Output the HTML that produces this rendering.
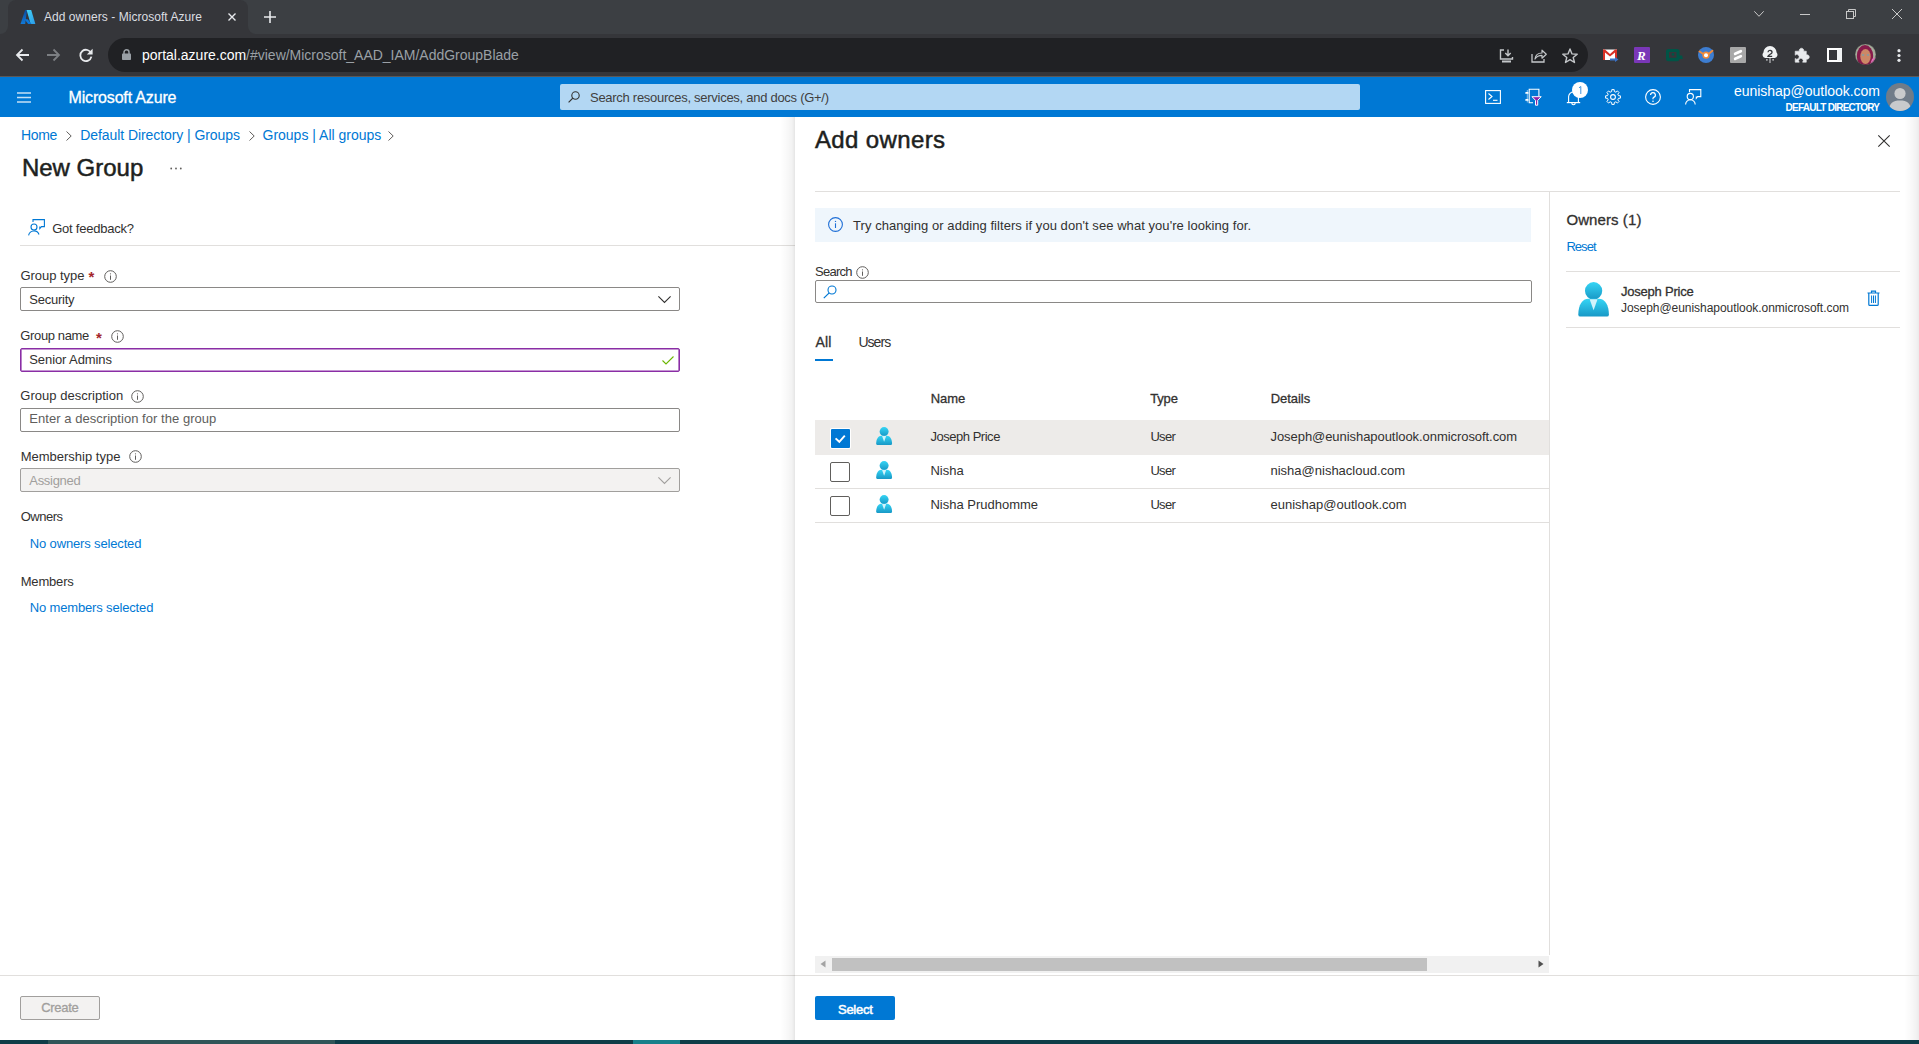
<!DOCTYPE html>
<html><head><meta charset="utf-8"><title>Add owners - Microsoft Azure</title>
<style>
html,body{margin:0;padding:0}
body{width:1919px;height:1044px;overflow:hidden;position:relative;background:#fff;font-family:"Liberation Sans",sans-serif}
.a{position:absolute}
.t{position:absolute;white-space:pre;line-height:1}
svg{position:absolute;overflow:visible}

</style></head><body>
<div class="a" style="left:0;top:0;width:1919px;height:34px;background:#3c3f43"></div>
<div class="a" style="left:8px;top:0px;width:240px;height:34px;background:#35363a;border-radius:8px 8px 0 0"></div>
<div class="a" style="left:0px;top:26px;width:8px;height:8px;background:#35363a"></div>
<div class="a" style="left:248px;top:26px;width:8px;height:8px;background:#35363a"></div>
<div class="a" style="left:0px;top:18px;width:8px;height:16px;background:#3c3f43;border-bottom-right-radius:8px"></div>
<div class="a" style="left:248px;top:18px;width:8px;height:16px;background:#3c3f43;border-bottom-left-radius:8px"></div>
<div class="a" style="left:0;top:34px;width:1919px;height:42px;background:#35363a"></div>
<div class="a" style="left:0;top:76px;width:1919px;height:1px;background:#5b5857"></div>
<div class="a" style="left:108px;top:38px;width:1480px;height:34px;background:#202124;border-radius:17px"></div>
<svg style="left:21px;top:10px" width="15" height="15" viewBox="0 0 15 15">
<defs><linearGradient id="az1" x1="0" y1="0" x2="0" y2="1"><stop offset="0" stop-color="#0a4a9c"/><stop offset="1" stop-color="#127ad8"/></linearGradient>
<linearGradient id="az2" x1="0" y1="0" x2="1" y2="1"><stop offset="0" stop-color="#45d4f6"/><stop offset="1" stop-color="#2a9ae8"/></linearGradient></defs>
<path d="M4.2 0H6L4.2 14H-0.5Z" fill="url(#az1)"/>
<path d="M5.6 0H10.2L14.4 14H9.6Z" fill="url(#az2)"/>
<path d="M3.6 9.2H6.7L10.6 14H7.1Z" fill="#0b78dc"/>
</svg>
<div class="t" style="top:10.80px;font-size:12px;color:#dcdee1;letter-spacing:0.047px;left:44px;">Add owners - Microsoft Azure</div>
<svg style="left:228px;top:13px" width="8" height="8" viewBox="0 0 8 8"><path d="M0.5 0.5L7.5 7.5M7.5 0.5L0.5 7.5" stroke="#e8eaed" stroke-width="1.4"/></svg>
<svg style="left:264px;top:11px" width="12" height="12" viewBox="0 0 12 12"><path d="M6 0V12M0 6H12" stroke="#e8eaed" stroke-width="1.6"/></svg>
<svg style="left:1754px;top:11px" width="10" height="6" viewBox="0 0 10 6"><path d="M0.3 0.3L5 5.3L9.7 0.3" stroke="#c8c8c8" stroke-width="1" fill="none"/></svg>
<div class="a" style="left:1800px;top:14px;width:10px;height:1px;background:#c8c8c8"></div>
<svg style="left:1846px;top:9px" width="10" height="10" viewBox="0 0 10 10"><rect x="0.5" y="2.5" width="7" height="7" stroke="#c8c8c8" fill="none"/><path d="M2.5 2.5V0.5H9.5V7.5H7.5" stroke="#c8c8c8" fill="none"/></svg>
<svg style="left:1892px;top:9px" width="10" height="10" viewBox="0 0 10 10"><path d="M0 0L10 10M10 0L0 10" stroke="#c8c8c8" stroke-width="1"/></svg>
<svg style="left:15px;top:48px" width="14" height="14" viewBox="0 0 14 14"><path d="M14 7H2M7.5 1.5L2 7L7.5 12.5" stroke="#e8eaed" stroke-width="1.8" fill="none"/></svg>
<svg style="left:47px;top:48px" width="14" height="14" viewBox="0 0 14 14"><path d="M0 7H12M6.5 1.5L12 7L6.5 12.5" stroke="#7c7f83" stroke-width="1.8" fill="none"/></svg>
<svg style="left:79px;top:48px" width="14" height="14" viewBox="0 0 14 14"><path d="M12.2 5.5A5.6 5.6 0 1 0 12.4 8.6" stroke="#e8eaed" stroke-width="1.8" fill="none"/><path d="M13.6 0.8V6.6H7.8Z" fill="#e8eaed"/></svg>
<svg style="left:122px;top:49px" width="9" height="11" viewBox="0 0 9 11"><path d="M2 5V3.3A2.5 2.5 0 0 1 7 3.3V5" stroke="#9aa0a6" stroke-width="1.5" fill="none"/><rect x="0" y="4.6" width="9" height="6.4" rx="0.8" fill="#9aa0a6"/></svg>
<div class="t" style="left:142px;top:47.8px;font-size:14px;color:#9aa0a6;letter-spacing:-0.01px"><span style="color:#fff">portal.azure.com</span>/#view/Microsoft_AAD_IAM/AddGroupBlade</div>
<svg style="left:1499px;top:49px" width="15" height="14" viewBox="0 0 15 14"><path d="M5 1H1.5V10H13.5V8" stroke="#c4c7ca" stroke-width="1.4" fill="none"/><path d="M9 0.5V6.5M6.3 4L9 6.8L11.7 4" stroke="#c4c7ca" stroke-width="1.4" fill="none"/><rect x="3" y="11.5" width="9" height="2" fill="#c4c7ca"/></svg>
<svg style="left:1531px;top:48px" width="16" height="15" viewBox="0 0 16 15"><path d="M1 6V14H13V11" stroke="#c4c7ca" stroke-width="1.3" fill="none"/><path d="M4 11C4.5 6.5 8 5 11 5V2.2L15.3 6.2L11 10.2V7.4C8.5 7.4 5.8 8.3 4 11Z" stroke="#c4c7ca" stroke-width="1.2" fill="none" stroke-linejoin="round"/></svg>
<svg style="left:1562px;top:48px" width="16" height="15" viewBox="0 0 16 15"><path d="M8 1L10 5.9L15.2 6.2L11.2 9.5L12.5 14.5L8 11.7L3.5 14.5L4.8 9.5L0.8 6.2L6 5.9Z" stroke="#c4c7ca" stroke-width="1.4" fill="none" stroke-linejoin="round"/></svg>
<svg style="left:1603px;top:49px" width="16" height="13" viewBox="0 0 16 13"><rect x="0" y="0.5" width="14" height="10.5" fill="#fff"/><path d="M0 0.5H2L7 5L12 0.5H14V11H12V3.5L7 7.5L2 3.5V11H0Z" fill="#d93025"/><path d="M7 9.5H12V8L15.5 10.5L12 13V11.5H7Z" fill="#3b72c4"/></svg>
<div class="a" style="left:1634px;top:47px;width:16px;height:16px;background:#7a37b8;border-radius:1px"></div>
<div class="t" style="left:1637px;top:47.5px;font:italic 700 13px/16px 'Liberation Serif',serif;color:#fff">R</div>
<svg style="left:1666px;top:49px" width="17" height="13" viewBox="0 0 17 13"><path d="M2.5 0H11A2.5 2.5 0 0 1 13.5 2.5V6.5H16.2L16.8 10H13.5V10A2.5 2.5 0 0 1 11 12.3H2.5A2.5 2.5 0 0 1 0 9.8V2.5A2.5 2.5 0 0 1 2.5 0Z" fill="#005446"/><rect x="3" y="3" width="7.5" height="5.8" fill="#35363a"/><circle cx="7" cy="5.4" r="1.4" fill="#005446"/></svg>
<svg style="left:1698px;top:47px" width="16" height="16" viewBox="0 0 16 16"><circle cx="8" cy="8" r="8" fill="#3d7dd0"/><path d="M1.5 4.5L5.8 7.2M14.5 3.8L10.2 7.2" stroke="#f28a38" stroke-width="1.9" stroke-linecap="round"/><circle cx="8" cy="8.2" r="3.6" fill="#f28a38"/><circle cx="8" cy="8.2" r="2" fill="#fff"/></svg>
<svg style="left:1730px;top:47px" width="16" height="16" viewBox="0 0 16 16"><rect width="16" height="16" rx="1" fill="#a8a8a8"/><path d="M5.2 6.8L10.8 4.2M5.2 11.8L10.8 9.2" stroke="#fff" stroke-width="2.8" stroke-linecap="round"/><path d="M5.5 9.2L10.5 6.8" stroke="#a8a8a8" stroke-width="0.8"/></svg>
<svg style="left:1761px;top:47px" width="18" height="17" viewBox="0 0 18 17"><path d="M4.2 11A3.2 3.2 0 0 1 2.4 5.6A6.2 6.2 0 0 1 15.6 5.6A3.2 3.2 0 0 1 13.8 11Z" fill="#f1f3f4"/><circle cx="5.9" cy="12.8" r="0.9" fill="#c8cacc"/><circle cx="12.1" cy="12.8" r="0.9" fill="#c8cacc"/><path d="M9 11V16" stroke="#c8cacc" stroke-width="1.1"/><path d="M7 5.2A2 2 0 0 1 11 5.4C11 6.8 7.6 7.6 7 9.3H11.2" stroke="#35363a" stroke-width="1.3" fill="none"/></svg>
<svg style="left:1794px;top:47px" width="16" height="16" viewBox="0 0 16 16"><path d="M1.2 4.2H5.3A2.3 2.3 0 1 1 9.7 4.2H12.3V7.8A2.3 2.3 0 1 1 12.3 12.2V15.2H8.6A2.3 2.3 0 1 0 5.2 15.2H1.2V11.4A2.3 2.3 0 1 0 1.2 8.2Z" fill="#e8eaed" stroke="#e8eaed" stroke-width="0.6" stroke-linejoin="round"/></svg>
<div class="a" style="left:1827px;top:48px;width:7.6px;height:10px;border:2px solid #fff;border-right:5px solid #f1f3f4;background:#35363a"></div>
<svg style="left:1855px;top:44.2px" width="21" height="21" viewBox="0 0 21 21"><defs><clipPath id="avc2"><circle cx="10.5" cy="10.5" r="10.5"/></clipPath></defs><g clip-path="url(#avc2)"><rect width="21" height="21" fill="#a7ae9c"/><ellipse cx="10" cy="12" rx="8.2" ry="11" fill="#861b4b"/><ellipse cx="10.5" cy="12.5" rx="5.2" ry="7.5" fill="#cd8866"/><ellipse cx="8" cy="11" rx="1.4" ry="0.9" fill="#8d9a9c"/><ellipse cx="13" cy="11" rx="1.4" ry="0.9" fill="#8d9a9c"/><path d="M17 15L21 13V21H15Z" fill="#e070b8"/></g><circle cx="10.5" cy="10.5" r="10.3" fill="none" stroke="#222" stroke-width="0.5" opacity="0.5"/></svg>
<svg style="left:1897px;top:49px" width="4" height="13" viewBox="0 0 4 13"><circle cx="2" cy="1.7" r="1.6" fill="#e8eaed"/><circle cx="2" cy="6.5" r="1.6" fill="#e8eaed"/><circle cx="2" cy="11.3" r="1.6" fill="#e8eaed"/></svg>
<div class="a" style="left:0;top:77px;width:1919px;height:40px;background:#0078d4"></div>
<svg style="left:17px;top:92px" width="14" height="11" viewBox="0 0 14 11"><path d="M0 1H14M0 5.5H14M0 10H14" stroke="#c5e0f5" stroke-width="1.4"/></svg>
<div class="t" style="top:89.60px;font-size:16px;color:#fff;-webkit-text-stroke:0.3px #fff;letter-spacing:-0.162px;left:68.5px;">Microsoft Azure</div>
<div class="a" style="left:560px;top:84px;width:800px;height:26px;background:#b3d7f3;border-radius:2px"></div>
<svg style="left:568px;top:91px" width="12" height="12" viewBox="0 0 12 12"><circle cx="7.5" cy="4.5" r="3.7" stroke="#323130" stroke-width="1.1" fill="none"/><path d="M4.8 7.2L0.6 11.4" stroke="#323130" stroke-width="1.2"/></svg>
<div class="t" style="top:91.15px;font-size:13px;color:#41403e;letter-spacing:-0.277px;left:590px;">Search resources, services, and docs (G+/)</div>
<svg style="left:1485px;top:90px" width="16" height="14" viewBox="0 0 16 14"><rect x="0.6" y="0.6" width="14.8" height="12.8" stroke="#fff" stroke-width="1.1" fill="none"/><path d="M3.5 3.5L7 6.5L3.5 9.5" stroke="#fff" stroke-width="1.1" fill="none"/><path d="M8 10.3H12.5" stroke="#fff" stroke-width="1.1"/></svg>
<svg style="left:1524px;top:88px" width="18" height="18" viewBox="0 0 18 18"><path d="M14.9 8V1.2H5.2V14.8H9" stroke="#fff" stroke-width="1.1" fill="none"/><path d="M3.3 2V14.5" stroke="#fff" stroke-width="0.8" opacity="0.7"/><rect x="1.2" y="4" width="3.4" height="1.8" rx="0.9" fill="#fff"/><rect x="1.2" y="11" width="3.4" height="1.8" rx="0.9" fill="#fff"/><path d="M8 8.7H17.2L13.7 12.3V17.2H11.5V12.3Z" fill="#8b1fa6" stroke="#fff" stroke-width="1"/></svg>
<svg style="left:1566px;top:90px" width="15" height="15" viewBox="0 0 15 15"><path d="M2.6 12.3V6.8A4.9 4.9 0 0 1 12.4 6.8V12.3" stroke="#fff" stroke-width="1.1" fill="none"/><path d="M0.8 12.6H14.2" stroke="#fff" stroke-width="1.2"/><path d="M5.8 13A1.7 1.7 0 0 0 9.2 13" stroke="#fff" stroke-width="1.1" fill="none"/></svg>
<div class="a" style="left:1572px;top:82px;width:16px;height:16px;border-radius:50%;background:#fff"></div>
<svg style="left:1578px;top:86px" width="4" height="8" viewBox="0 0 4 8"><path d="M1 1.8L2.8 0.5V8" stroke="#2b88d8" stroke-width="0.9" fill="none"/></svg>
<svg style="left:1605px;top:89px" width="16" height="16" viewBox="0 0 16 16"><path d="M13.44 6.67 L15.41 6.82 L15.41 9.18 L13.44 9.33 L12.79 10.91 L14.07 12.40 L12.40 14.07 L10.91 12.79 L9.33 13.44 L9.18 15.41 L6.82 15.41 L6.67 13.44 L5.09 12.79 L3.60 14.07 L1.93 12.40 L3.21 10.91 L2.56 9.33 L0.59 9.18 L0.59 6.82 L2.56 6.67 L3.21 5.09 L1.93 3.60 L3.60 1.93 L5.09 3.21 L6.67 2.56 L6.82 0.59 L9.18 0.59 L9.33 2.56 L10.91 3.21 L12.40 1.93 L14.07 3.60 L12.79 5.09Z" stroke="#fff" stroke-width="1" fill="none" stroke-linejoin="round"/><circle cx="8" cy="8" r="2.4" stroke="#fff" stroke-width="1.1" fill="none"/></svg>
<svg style="left:1645px;top:89px" width="16" height="16" viewBox="0 0 16 16"><circle cx="8" cy="8" r="7.4" stroke="#fff" stroke-width="1.1" fill="none"/><path d="M5.6 6A2.4 2.4 0 1 1 8.6 8.3C8.1 8.5 8 8.9 8 9.6V10.2" stroke="#fff" stroke-width="1.2" fill="none"/><circle cx="8" cy="12.2" r="0.8" fill="#fff"/></svg>
<svg style="left:1685px;top:89px" width="17" height="16" viewBox="0 0 17 16"><circle cx="5.3" cy="7.5" r="3.1" stroke="#fff" stroke-width="1.1" fill="none"/><path d="M0.6 15.6A4.8 4.8 0 0 1 10.2 15.6" stroke="#fff" stroke-width="1.1" fill="none"/><path d="M4.5 3.2V0.6H15.8V7.6H12.6L11.3 9.2V7.6" stroke="#fff" stroke-width="1.1" fill="none"/></svg>
<div class="t" style="top:83.80px;font-size:14px;color:#fff;letter-spacing:-0.028px;left:1734.00px;">eunishap@outlook.com</div>
<div class="t" style="top:103.10px;font-size:10px;color:#fff;font-weight:700;letter-spacing:-0.755px;left:1785.60px;">DEFAULT DIRECTORY</div>
<svg style="left:1886px;top:83px" width="28" height="28" viewBox="0 0 28 28"><defs><clipPath id="avc"><circle cx="14" cy="14" r="14"/></clipPath></defs><circle cx="14" cy="14" r="14" fill="#707c89"/><g clip-path="url(#avc)"><circle cx="14" cy="10.5" r="5.6" fill="#c8cacc"/><path d="M3 28C3 20 7 17.5 14 17.5C21 17.5 25 20 25 28Z" fill="#c8cacc"/></g></svg>
<div class="t" style="top:127.90px;font-size:14px;color:#0078d4;letter-spacing:-0.286px;left:20.9px;">Home</div>
<svg style="left:66px;top:131px" width="6" height="10" viewBox="0 0 6 10"><path d="M0.5 0.5L5.2 5L0.5 9.5" stroke="#605e5c" stroke-width="1" fill="none"/></svg>
<div class="t" style="top:127.90px;font-size:14px;color:#0078d4;letter-spacing:-0.076px;left:80.3px;">Default Directory | Groups</div>
<svg style="left:249px;top:131px" width="6" height="10" viewBox="0 0 6 10"><path d="M0.5 0.5L5.2 5L0.5 9.5" stroke="#605e5c" stroke-width="1" fill="none"/></svg>
<div class="t" style="top:127.90px;font-size:14px;color:#0078d4;left:262.5px;">Groups | All groups</div>
<svg style="left:388px;top:131px" width="6" height="10" viewBox="0 0 6 10"><path d="M0.5 0.5L5.2 5L0.5 9.5" stroke="#605e5c" stroke-width="1" fill="none"/></svg>
<div class="t" style="top:156.40px;font-size:24px;color:#201f1e;-webkit-text-stroke:0.5px #201f1e;left:21.9px;">New Group</div>
<svg style="left:170px;top:167px" width="12" height="3" viewBox="0 0 12 3"><circle cx="1.2" cy="1.5" r="0.9" fill="#605e5c"/><circle cx="6" cy="1.5" r="0.9" fill="#605e5c"/><circle cx="10.8" cy="1.5" r="0.9" fill="#605e5c"/></svg>
<svg style="left:28px;top:219px" width="17" height="17" viewBox="0 0 17 17"><circle cx="6" cy="8" r="3" stroke="#0078d4" stroke-width="1.1" fill="none"/><path d="M0.6 16.4A5.4 5.4 0 0 1 11 15.5" stroke="#0078d4" stroke-width="1.1" fill="none"/><path d="M5 3V0.6H16.4V7.6H13.5L11.8 9.5V7.6" stroke="#0078d4" stroke-width="1.1" fill="none"/></svg>
<div class="t" style="top:221.85px;font-size:13px;color:#323130;letter-spacing:-0.230px;left:52.2px;">Got feedback?</div>
<div class="a" style="left:20px;top:245px;width:775px;height:1px;background:#e1dfdd"></div>
<div class="t" style="top:268.55px;font-size:13px;color:#323130;letter-spacing:-0.036px;left:20.4px;">Group type</div>
<div class="t" style="top:269.05px;font-size:15px;color:#a4262c;font-weight:700;left:88.5px;">*</div>
<svg style="left:104.3px;top:269.5px" width="13" height="13" viewBox="0 0 13 13"><circle cx="6.5" cy="6.5" r="5.8" stroke="#605e5c" stroke-width="1" fill="none"/><path d="M6.5 5.5V9.8" stroke="#605e5c" stroke-width="1"/><circle cx="6.5" cy="3.8" r="0.6" fill="#605e5c"/></svg>
<div class="a" style="left:20px;top:287px;width:658px;height:22px;border:1px solid #8a8886;background:#fff;border-radius:2px"></div>
<div class="t" style="top:292.75px;font-size:13px;color:#323130;letter-spacing:-0.238px;left:29.3px;">Security</div>
<svg style="left:658px;top:296px" width="13" height="7" viewBox="0 0 13 7"><path d="M0.4 0.4L6.5 6.5L12.6 0.4" stroke="#323130" stroke-width="1.1" fill="none"/></svg>
<div class="t" style="top:329.05px;font-size:13px;color:#323130;letter-spacing:-0.363px;left:20.3px;">Group name</div>
<div class="t" style="top:329.55px;font-size:15px;color:#a4262c;font-weight:700;left:96px;">*</div>
<svg style="left:111.3px;top:329.5px" width="13" height="13" viewBox="0 0 13 13"><circle cx="6.5" cy="6.5" r="5.8" stroke="#605e5c" stroke-width="1" fill="none"/><path d="M6.5 5.5V9.8" stroke="#605e5c" stroke-width="1"/><circle cx="6.5" cy="3.8" r="0.6" fill="#605e5c"/></svg>
<div class="a" style="left:20px;top:348px;width:658px;height:22px;border:1px solid #8a2da5;box-shadow:inset 0 0 0 0.6px #8a2da5;background:#fff;border-radius:2px"></div>
<div class="t" style="top:352.65px;font-size:13px;color:#323130;letter-spacing:-0.094px;left:29.3px;">Senior Admins</div>
<svg style="left:662px;top:356px" width="12" height="9" viewBox="0 0 12 9"><path d="M0.5 4.5L4 8L11.5 0.5" stroke="#6bb700" stroke-width="1.1" fill="none"/></svg>
<div class="t" style="top:389.45px;font-size:13px;color:#323130;letter-spacing:0.017px;left:20.3px;">Group description</div>
<svg style="left:131.4px;top:389.5px" width="13" height="13" viewBox="0 0 13 13"><circle cx="6.5" cy="6.5" r="5.8" stroke="#605e5c" stroke-width="1" fill="none"/><path d="M6.5 5.5V9.8" stroke="#605e5c" stroke-width="1"/><circle cx="6.5" cy="3.8" r="0.6" fill="#605e5c"/></svg>
<div class="a" style="left:20px;top:408px;width:658px;height:22px;border:1px solid #8a8886;background:#fff;border-radius:2px"></div>
<div class="t" style="top:412.35px;font-size:13px;color:#605e5c;letter-spacing:0.040px;left:29.3px;">Enter a description for the group</div>
<div class="t" style="top:449.95px;font-size:13px;color:#323130;left:20.7px;">Membership type</div>
<svg style="left:129.4px;top:449.5px" width="13" height="13" viewBox="0 0 13 13"><circle cx="6.5" cy="6.5" r="5.8" stroke="#605e5c" stroke-width="1" fill="none"/><path d="M6.5 5.5V9.8" stroke="#605e5c" stroke-width="1"/><circle cx="6.5" cy="3.8" r="0.6" fill="#605e5c"/></svg>
<div class="a" style="left:20px;top:468px;width:658px;height:22px;border:1px solid #a19f9d;background:#f3f2f1;border-radius:2px"></div>
<div class="t" style="top:473.75px;font-size:13px;color:#a19f9d;letter-spacing:-0.298px;left:29.3px;">Assigned</div>
<svg style="left:658px;top:477px" width="13" height="7" viewBox="0 0 13 7"><path d="M0.4 0.4L6.5 6.5L12.6 0.4" stroke="#a19f9d" stroke-width="1.1" fill="none"/></svg>
<div class="t" style="top:509.65px;font-size:13px;color:#323130;letter-spacing:-0.499px;left:20.7px;">Owners</div>
<div class="t" style="top:536.75px;font-size:13px;color:#0078d4;letter-spacing:-0.151px;left:29.8px;">No owners selected</div>
<div class="t" style="top:574.95px;font-size:13px;color:#323130;letter-spacing:-0.181px;left:20.7px;">Members</div>
<div class="t" style="top:601.35px;font-size:13px;color:#0078d4;letter-spacing:-0.159px;left:29.8px;">No members selected</div>
<div class="a" style="left:0;top:975px;width:1919px;height:1px;background:#e1dfdd"></div>
<div class="a" style="left:20px;top:996px;width:78px;height:22px;border:1px solid #a19f9d;background:#f3f2f1;border-radius:2px"></div>
<div class="t" style="top:1000.95px;font-size:13px;color:#a19f9d;-webkit-text-stroke:0.3px #a19f9d;letter-spacing:-0.286px;left:41.2px;">Create</div>
<div class="a" style="left:780px;top:117px;width:15px;height:923px;background:linear-gradient(to right,rgba(0,0,0,0),rgba(0,0,0,0.02) 40%,rgba(0,0,0,0.05) 80%,rgba(0,0,0,0.10))"></div>
<div class="a" style="left:795px;top:117px;width:1124px;height:923px;background:#fff"></div>
<div class="a" style="left:1904px;top:117px;width:15px;height:923px;background:linear-gradient(to right,rgba(0,0,0,0),rgba(0,0,0,0.02) 40%,rgba(0,0,0,0.05) 80%,rgba(0,0,0,0.08))"></div>
<div class="t" style="top:128.40px;font-size:24px;color:#201f1e;-webkit-text-stroke:0.5px #201f1e;letter-spacing:0.361px;left:815px;">Add owners</div>
<svg style="left:1878px;top:135px" width="12" height="12" viewBox="0 0 12 12"><path d="M0.3 0.3L11.7 11.7M11.7 0.3L0.3 11.7" stroke="#323130" stroke-width="1.1"/></svg>
<div class="a" style="left:815px;top:191px;width:1085px;height:1px;background:#e1dfdd"></div>
<div class="a" style="left:1549px;top:192px;width:1px;height:763px;background:#e1dfdd"></div>
<div class="a" style="left:815px;top:208px;width:716px;height:34px;background:#eff6fc"></div>
<svg style="left:828px;top:217px" width="15" height="15" viewBox="0 0 15 15"><circle cx="7.5" cy="7.5" r="6.9" stroke="#1f6fd6" stroke-width="1.1" fill="none"/><path d="M7.5 6.3V11" stroke="#1f6fd6" stroke-width="1.1"/><circle cx="7.5" cy="4.4" r="0.7" fill="#1f6fd6"/></svg>
<div class="t" style="top:218.95px;font-size:13px;color:#323130;letter-spacing:0.057px;left:853px;">Try changing or adding filters if you don't see what you're looking for.</div>
<div class="t" style="top:264.85px;font-size:13px;color:#323130;letter-spacing:-0.741px;left:815.1px;">Search</div>
<svg style="left:856.3px;top:265.5px" width="13" height="13" viewBox="0 0 13 13"><circle cx="6.5" cy="6.5" r="5.8" stroke="#605e5c" stroke-width="1" fill="none"/><path d="M6.5 5.5V9.8" stroke="#605e5c" stroke-width="1"/><circle cx="6.5" cy="3.8" r="0.6" fill="#605e5c"/></svg>
<div class="a" style="left:815px;top:280px;width:715px;height:21px;border:1px solid #8a8886;background:#fff;border-radius:2px"></div>
<svg style="left:823px;top:285px" width="14" height="14" viewBox="0 0 14 14"><circle cx="9" cy="5" r="4" stroke="#0078d4" stroke-width="1.1" fill="none"/><path d="M6.2 7.8L0.8 13.2" stroke="#0078d4" stroke-width="1.2"/></svg>
<div class="t" style="top:335.10px;font-size:14px;color:#323130;-webkit-text-stroke:0.3px #323130;letter-spacing:0.169px;left:815.5px;">All</div>
<div class="t" style="top:335.10px;font-size:14px;color:#323130;letter-spacing:-0.941px;left:858.4px;">Users</div>
<div class="a" style="left:815px;top:359px;width:18px;height:2px;background:#0078d4"></div>
<div class="t" style="top:391.95px;font-size:13px;color:#323130;-webkit-text-stroke:0.3px #323130;letter-spacing:-0.062px;left:930.7px;">Name</div>
<div class="t" style="top:391.95px;font-size:13px;color:#323130;-webkit-text-stroke:0.3px #323130;letter-spacing:-0.163px;left:1150.2px;">Type</div>
<div class="t" style="top:391.95px;font-size:13px;color:#323130;-webkit-text-stroke:0.3px #323130;letter-spacing:-0.042px;left:1270.7px;">Details</div>
<div class="a" style="left:815px;top:420px;width:734px;height:35px;background:#edebe9"></div>
<div class="a" style="left:815px;top:488px;width:734px;height:1px;background:#e1dfdd"></div>
<div class="a" style="left:815px;top:522px;width:734px;height:1px;background:#e1dfdd"></div>
<div class="a" style="left:831px;top:429px;width:19px;height:19px;background:#0078d4;border-radius:1px;box-shadow:0 0 0 1px #fff"></div>
<svg style="left:834px;top:433px" width="13" height="10" viewBox="0 0 13 10"><path d="M1.6 5.4L5.3 8.8L10.8 2.6" stroke="#fff" stroke-width="1.9" fill="none"/></svg>
<svg style="left:875.8px;top:426.8px" width="16.45" height="18.1" viewBox="0 0 32 35" preserveAspectRatio="none"><defs><linearGradient id="ug0" x1="0" y1="0" x2="0" y2="1"><stop offset="0" stop-color="#35d5f5"/><stop offset="1" stop-color="#1898c6"/></linearGradient></defs><circle cx="15.8" cy="8.85" r="8.75" fill="url(#ug0)"/><path d="M0.3 32.6C0.3 23 4.5 16.8 10.5 16.8H21.1C27.1 16.8 31.3 23 31.3 32.6Q31.3 34.8 29.3 34.8H2.3Q0.3 34.8 0.3 32.6Z" fill="url(#ug0)"/><path d="M11.8 17.3H19.8L15.8 28.5Z" fill="#d2f3fb"/></svg>
<div class="t" style="top:429.65px;font-size:13px;color:#323130;letter-spacing:-0.469px;left:930.4px;">Joseph Price</div>
<div class="t" style="top:429.65px;font-size:13px;color:#323130;letter-spacing:-0.684px;left:1150.4px;">User</div>
<div class="t" style="top:429.65px;font-size:13px;color:#323130;letter-spacing:-0.059px;left:1270.5px;">Joseph@eunishapoutlook.onmicrosoft.com</div>
<div class="a" style="left:830px;top:462px;width:18px;height:18px;border:1.5px solid #605e5c;background:#fff;border-radius:2px"></div>
<svg style="left:875.8px;top:460.8px" width="16.45" height="18.1" viewBox="0 0 32 35" preserveAspectRatio="none"><defs><linearGradient id="ug1" x1="0" y1="0" x2="0" y2="1"><stop offset="0" stop-color="#35d5f5"/><stop offset="1" stop-color="#1898c6"/></linearGradient></defs><circle cx="15.8" cy="8.85" r="8.75" fill="url(#ug1)"/><path d="M0.3 32.6C0.3 23 4.5 16.8 10.5 16.8H21.1C27.1 16.8 31.3 23 31.3 32.6Q31.3 34.8 29.3 34.8H2.3Q0.3 34.8 0.3 32.6Z" fill="url(#ug1)"/><path d="M11.8 17.3H19.8L15.8 28.5Z" fill="#d2f3fb"/></svg>
<div class="t" style="top:463.65px;font-size:13px;color:#323130;left:930.4px;">Nisha</div>
<div class="t" style="top:463.65px;font-size:13px;color:#323130;letter-spacing:-0.684px;left:1150.4px;">User</div>
<div class="t" style="top:463.65px;font-size:13px;color:#323130;left:1270.5px;">nisha@nishacloud.com</div>
<div class="a" style="left:830px;top:496px;width:18px;height:18px;border:1.5px solid #605e5c;background:#fff;border-radius:2px"></div>
<svg style="left:875.8px;top:494.8px" width="16.45" height="18.1" viewBox="0 0 32 35" preserveAspectRatio="none"><defs><linearGradient id="ug2" x1="0" y1="0" x2="0" y2="1"><stop offset="0" stop-color="#35d5f5"/><stop offset="1" stop-color="#1898c6"/></linearGradient></defs><circle cx="15.8" cy="8.85" r="8.75" fill="url(#ug2)"/><path d="M0.3 32.6C0.3 23 4.5 16.8 10.5 16.8H21.1C27.1 16.8 31.3 23 31.3 32.6Q31.3 34.8 29.3 34.8H2.3Q0.3 34.8 0.3 32.6Z" fill="url(#ug2)"/><path d="M11.8 17.3H19.8L15.8 28.5Z" fill="#d2f3fb"/></svg>
<div class="t" style="top:497.65px;font-size:13px;color:#323130;left:930.4px;">Nisha Prudhomme</div>
<div class="t" style="top:497.65px;font-size:13px;color:#323130;letter-spacing:-0.684px;left:1150.4px;">User</div>
<div class="t" style="top:497.65px;font-size:13px;color:#323130;left:1270.5px;">eunishap@outlook.com</div>
<div class="a" style="left:815px;top:956px;width:734px;height:17px;background:#f1f1f1"></div>
<div class="a" style="left:832px;top:958px;width:595px;height:13px;background:#c1c1c1"></div>
<svg style="left:820px;top:960px" width="6" height="8" viewBox="0 0 6 8"><path d="M5.5 0.5V7.5L0.5 4Z" fill="#a3a3a3"/></svg>
<svg style="left:1538px;top:960px" width="6" height="8" viewBox="0 0 6 8"><path d="M0.5 0.5V7.5L5.5 4Z" fill="#505050"/></svg>
<div class="a" style="left:795px;top:975px;width:1124px;height:1px;background:#e1dfdd"></div>
<div class="a" style="left:815px;top:996px;width:80px;height:24px;background:#0078d4;border-radius:2px"></div>
<div class="t" style="top:1002.95px;font-size:13px;color:#fff;-webkit-text-stroke:0.5px #fff;letter-spacing:-0.268px;left:838px;">Select</div>
<div class="t" style="top:212.05px;font-size:15px;color:#323130;-webkit-text-stroke:0.3px #323130;letter-spacing:0.090px;left:1566.4px;">Owners (1)</div>
<div class="t" style="top:239.95px;font-size:13px;color:#0078d4;letter-spacing:-0.942px;left:1566.4px;">Reset</div>
<div class="a" style="left:1566px;top:271px;width:334px;height:1px;background:#e1dfdd"></div>
<div class="a" style="left:1566px;top:327px;width:334px;height:1px;background:#e1dfdd"></div>
<svg style="left:1577.7px;top:282px" width="31.6" height="34.8" viewBox="0 0 32 35" preserveAspectRatio="none"><defs><linearGradient id="ugr" x1="0" y1="0" x2="0" y2="1"><stop offset="0" stop-color="#35d5f5"/><stop offset="1" stop-color="#1898c6"/></linearGradient></defs><circle cx="15.8" cy="8.85" r="8.75" fill="url(#ugr)"/><path d="M0.3 32.6C0.3 23 4.5 16.8 10.5 16.8H21.1C27.1 16.8 31.3 23 31.3 32.6Q31.3 34.8 29.3 34.8H2.3Q0.3 34.8 0.3 32.6Z" fill="url(#ugr)"/><path d="M11.8 17.3H19.8L15.8 28.5Z" fill="#d2f3fb"/></svg>
<div class="t" style="top:284.85px;font-size:13px;color:#323130;-webkit-text-stroke:0.3px #323130;letter-spacing:-0.214px;left:1621px;">Joseph Price</div>
<div class="t" style="top:301.60px;font-size:12px;color:#323130;letter-spacing:-0.044px;left:1621px;">Joseph@eunishapoutlook.onmicrosoft.com</div>
<svg style="left:1867px;top:290px" width="13" height="16" viewBox="0 0 13 16"><path d="M0.5 3H12.5M4.5 3V1.2H8.5V3" stroke="#0078d4" stroke-width="1.2" fill="none"/><path d="M1.8 3V14.4A1 1 0 0 0 2.8 15.4H10.2A1 1 0 0 0 11.2 14.4V3" stroke="#0078d4" stroke-width="1.2" fill="none"/><path d="M4.6 5.5V13M6.5 5.5V13M8.4 5.5V13" stroke="#0078d4" stroke-width="1"/></svg>
<div class="a" style="left:0;top:1040px;width:1919px;height:4px;background:#0e3d48"></div>
<div class="a" style="left:48px;top:1040px;width:287px;height:4px;background:#2f5558"></div>
<div class="a" style="left:633px;top:1040px;width:47px;height:4px;background:#17808a"></div>
</body></html>
